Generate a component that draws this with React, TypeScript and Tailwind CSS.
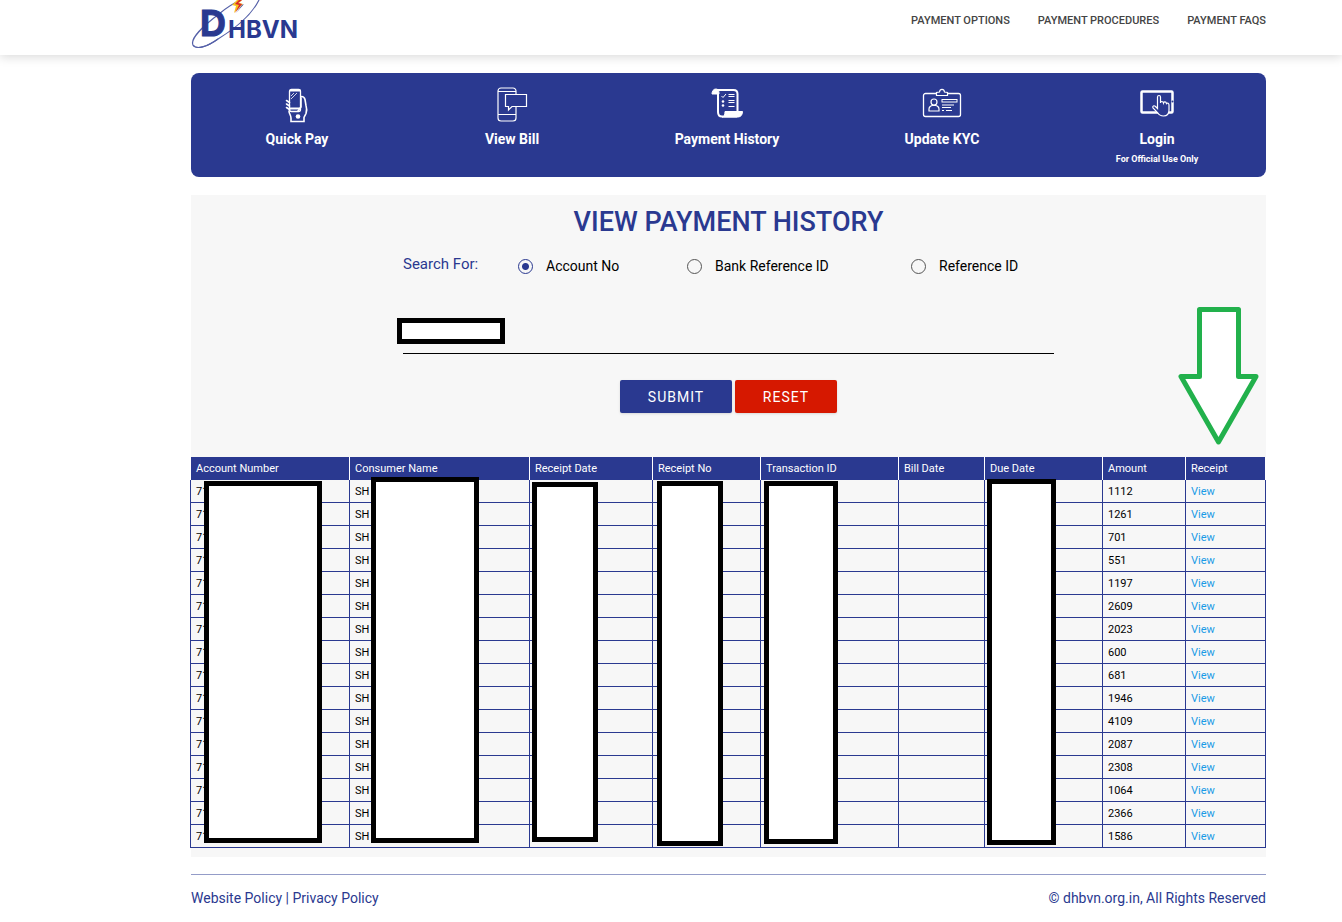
import type { ReactNode } from "react";

const navLinks = ["PAYMENT OPTIONS", "PAYMENT PROCEDURES", "PAYMENT FAQS"];

const columns = [
	{ label: "Account Number", width: "w-[159px]" },
	{ label: "Consumer Name", width: "w-[180px]" },
	{ label: "Receipt Date", width: "w-[123px]" },
	{ label: "Receipt No", width: "w-[108px]" },
	{ label: "Transaction ID", width: "w-[138px]" },
	{ label: "Bill Date", width: "w-[86px]" },
	{ label: "Due Date", width: "w-[118px]" },
	{ label: "Amount", width: "w-[83px]" },
	{ label: "Receipt", width: "w-[80px]" },
];

const amounts = [
	1112, 1261, 701, 551, 1197, 2609, 2023, 600, 681, 1946, 4109, 2087, 2308,
	1064, 2366, 1586,
];

// boxes that hide the personal data in the table
const masks = [
	"left-[13px] top-[24px] h-[362px] w-[118px]",
	"left-[180px] top-[20px] h-[366px] w-[108px]",
	"left-[341px] top-[25px] h-[360px] w-[66px]",
	"left-[466px] top-[24px] h-[365px] w-[66px]",
	"left-[573px] top-[24px] h-[363px] w-[74px]",
	"left-[796px] top-[22px] h-[366px] w-[69px]",
];

function Logo() {
	return (
		<svg width="110" height="50" viewBox="0 0 110 50" role="img" aria-label="DHBVN">
			<g fill="none" stroke="#5560a8" strokeWidth="1.2">
				<path d="M50 0C40 4 34 9 28 14 12 26-1 39 2 45c3 5 14 2 25-6" />
				<path d="M2 45c3 5 14 2 25-6C45 28 61 14 68 0" />
			</g>
			<path d="M46 0l-5 5 4 1-2 7 9-9-4-1 3-3z" fill="#f7c21c" />
			<path d="M48 0l-4 4 4 1-4 8 7-9-4-1 4-3z" fill="#d8262c" />
			<path d="M51 5l2-1-8 9z" fill="#2a3990" />
			<g fill="#2a3990" className="font-['Inter',sans-serif]">
				<text x="9" y="36" fontSize="36" fontWeight="700" stroke="#2a3990" strokeWidth="1">
					D
				</text>
				<text x="37" y="38" fontSize="24" fontWeight="700">
					HBVN
				</text>
			</g>
		</svg>
	);
}

function QuickPayIcon() {
	return (
		<svg width="36" height="36" viewBox="-1 -1 36 36" fill="none" stroke="white">
			<rect x="9.5" y="1.5" width="11" height="22" rx="2" strokeWidth="1.3" />
			<path d="M9.500 2.500h11M9.500 20.500h11" strokeWidth="2" />
			<path d="M11 11l6-6M11 8l3-3" strokeWidth=".8" />
			<path
				d="M9.500 14.500L6.500 12.500M9.500 18l-3-2M9.500 21.500l-3-2M9 23c0 3 2 4 2 7v3.500h13v-4l2-4c1-3 1-5 0-8l-1-6c-.500-2-1.500-3-3.500-3M21 10v9l-3 4"
				strokeWidth="1.600"
				strokeLinecap="round"
			/>
			<circle cx="18" cy="28.500" r="2.300" fill="white" stroke="none" />
		</svg>
	);
}

function ViewBillIcon() {
	return (
		<svg width="36" height="36" viewBox="0 0 36 36" fill="none" stroke="white">
			<path d="M22 7V4a3 3 0 0 0-3-3H7a3 3 0 0 0-3 3v27a3 3 0 0 0 3 3h12a3 3 0 0 0 3-3V20" strokeWidth="1.200" />
			<path d="M4 4.500h18M4 27.500h18" strokeWidth="1.200" />
			<path d="M11.500 7.500h21v12H18l-3.500 3.500v-3.500h-3z" strokeWidth="1.200" />
		</svg>
	);
}

function HistoryIcon() {
	return (
		<svg width="36" height="36" viewBox="-1 0 36 36" fill="none" stroke="white">
			<path d="M8 7v18c0 3 1.500 4.500 4 4.500h15" strokeWidth="2" />
			<path d="M27.500 24V7c0-3-1-4-4-4H7" strokeWidth="2" />
			<path d="M2 7c0-3 1.500-5 4-5s3 2 3 5z" fill="white" />
			<path d="M15 24.500h17.500c0 3-1.500 5.500-4.500 5.500H12c2 0 3-2 3-5.500z" fill="white" />
			<path d="M11.500 9l1.500 1.500 3-3.500" strokeWidth="1" />
			<circle cx="13" cy="14.500" r="1.300" fill="white" stroke="none" />
			<circle cx="13" cy="18.500" r="1.300" fill="white" stroke="none" />
			<path d="M18.500 7.500h6M18.500 9.500h6M18.500 13.500h6M18.500 15.500h6M18.500 19.500h6" strokeWidth="1" />
		</svg>
	);
}

function KycIcon() {
	return (
		<svg width="40" height="36" viewBox="0 0 40 36" fill="none" stroke="white">
			<path d="M14 6.500H3.500a2 2 0 0 0-2 2v19a2 2 0 0 0 2 2h33a2 2 0 0 0 2-2v-19a2 2 0 0 0-2-2H26" strokeWidth="1.300" />
			<path d="M14.500 8.500v-3l3-.5c.500-3.500 4.500-3.500 5 0l3 .5v3z" strokeWidth="1.200" />
			<circle cx="12" cy="15" r="3" strokeWidth="1.200" />
			<path d="M7 24v-2c0-2 2-3.500 3.500-3.500h3c1.500 0 3.500 1.500 3.500 3.500v2z" strokeWidth="1.200" />
			<rect x="20" y="12.500" width="15" height="2.500" />
			<path d="M20 18h12M20 20.500h9" strokeWidth="1.200" />
			<path d="M20 23.500h2m2 0h6" strokeWidth="1" />
		</svg>
	);
}

function LoginIcon() {
	return (
		<svg width="36" height="36" viewBox="0 0 36 36" fill="none" stroke="white">
			<rect x="2.500" y="4.500" width="31" height="21" rx="1" strokeWidth="2.500" />
			<circle cx="33.500" cy="14.500" r="1" fill="#2a3990" stroke="none" />
			<path
				d="M18.500 20V10c0-2 3-2 3 0v6c0-2 2.500-2 3 0 .500-1.500 2.500-1.500 3 .5 1-1 2.500 0 2.500 1.500V23c0 4-2 6-5.500 6-3 0-4.500-1-6-3.500L14 21c-1-2 1-3 2.500-1.500l2 2z"
				fill="#2a3990"
				strokeWidth="1.200"
			/>
		</svg>
	);
}

const services: { label: string; note?: string; icon: ReactNode }[] = [
	{ label: "Quick Pay", icon: <QuickPayIcon /> },
	{ label: "View Bill", icon: <ViewBillIcon /> },
	{ label: "Payment History", icon: <HistoryIcon /> },
	{ label: "Update KYC", icon: <KycIcon /> },
	{ label: "Login", note: "For Official Use Only", icon: <LoginIcon /> },
];

function SearchOption({ label, checked }: { label: string; checked?: boolean }) {
	return (
		<label className="flex items-center gap-[13px] text-sm leading-5 text-black">
			<input
				type="radio"
				name="searchFor"
				defaultChecked={checked}
				className="size-[15px] appearance-none rounded-full border border-[#555] checked:border-[#2a3990] checked:bg-[radial-gradient(#2a3990_3px,transparent_4px)]"
			/>
			{label}
		</label>
	);
}

function SearchForm() {
	return (
		<form className="px-[212px] pt-3.5" onSubmit={(e) => e.preventDefault()}>
			<fieldset className="flex items-center">
				<legend className="float-left w-[115px] pb-1 text-[15px] leading-5 text-[#2a3990]">
					Search For:
				</legend>
				<div className="flex flex-wrap">
					<div className="w-[169px]">
						<SearchOption label="Account No" checked />
					</div>
					<div className="w-[224px]">
						<SearchOption label="Bank Reference ID" />
					</div>
					<SearchOption label="Reference ID" />
				</div>
			</fieldset>
			<div className="relative mt-10">
				<input
					type="text"
					aria-label="Account No"
					className="block h-9 w-full border-b border-black bg-transparent outline-none"
				/>
				<span className="absolute -left-1.5 top-0 h-[26px] w-[108px] border-[5px] border-black bg-white" />
			</div>
			<div className="mt-[26px] flex justify-center gap-[3px] text-sm tracking-[1px] text-white">
				<button type="submit" className="h-[33px] w-28 rounded-xs bg-[#2a3990] shadow">
					SUBMIT
				</button>
				<button type="reset" className="h-[33px] w-[102px] rounded-xs bg-[#d61800] shadow">
					RESET
				</button>
			</div>
		</form>
	);
}

function HistoryTable() {
	return (
		<div className="relative mt-11">
			<table className="-ml-px w-[calc(100%+1px)] table-fixed border-collapse text-left text-[11px] leading-4">
				<thead>
					<tr className="h-[22px] bg-[#2a3990] text-white">
						{columns.map((column) => (
							<th
								key={column.label}
								className={`${column.width} border-x border-white px-[5px] pb-0 pt-0.5 font-normal`}
							>
								{column.label}
							</th>
						))}
					</tr>
				</thead>
				<tbody>
					{amounts.map((amount) => (
						<tr key={amount} className="h-[23px] text-black">
							<td className="border border-[#2a3990] px-[5px] pt-0.5">71</td>
							<td className="border border-[#2a3990] px-[5px] pt-0.5">SH</td>
							<td className="border border-[#2a3990]" />
							<td className="border border-[#2a3990]" />
							<td className="border border-[#2a3990]" />
							<td className="border border-[#2a3990]" />
							<td className="border border-[#2a3990]" />
							<td className="border border-[#2a3990] px-[5px] pt-0.5">{amount}</td>
							<td className="border border-[#2a3990] px-[5px] pt-0.5">
								<a href="#" className="text-[#1a9be6]">
									View
								</a>
							</td>
						</tr>
					))}
				</tbody>
			</table>
			{masks.map((mask) => (
				<span key={mask} className={`absolute border-[5px] border-black bg-white ${mask}`} />
			))}
			<svg
				className="absolute -top-[151px] right-[6px]"
				width="82"
				height="140"
				viewBox="0 0 82 140"
				fill="white"
				stroke="#22b14c"
				strokeWidth="5"
				strokeLinejoin="round"
			>
				<path d="M21.500 3.500h39v67h17.500L40.500 136 3 70.500h18.500z" />
			</svg>
		</div>
	);
}

export default function App() {
	return (
		<div className="bg-white font-['Roboto',sans-serif]">
			<header className="flex h-[55px] items-start justify-between pl-[191px] pr-[76px] shadow-[0_2px_10px_rgba(0,0,0,0.15)]">
				<a href="#">
					<Logo />
				</a>
				<nav className="flex gap-7 pt-[13px] text-[11px] font-medium leading-4 text-[#444]">
					{navLinks.map((link) => (
						<a key={link} href="#">
							{link}
						</a>
					))}
				</nav>
			</header>

			<div className="pl-[191px] pr-[76px] pt-[18px]">
				<nav className="grid h-[104px] grid-cols-5 rounded-lg bg-[#2a3990] pt-3.5 text-white">
					{services.map((service) => (
						<a key={service.label} href="#" className="flex flex-col items-center pr-[3px]">
							{service.icon}
							<span className="mt-1.5 text-sm font-bold leading-5">{service.label}</span>
							{service.note && (
								<span className="mt-1 text-[9px] font-bold leading-3">{service.note}</span>
							)}
						</a>
					))}
				</nav>

				<main className="mt-[18px] bg-[#f7f7f7] pb-[9px] pt-[9px]">
					<h1 className="text-center text-[27px] font-medium leading-9 text-[#2a3990]">
						VIEW PAYMENT HISTORY
					</h1>
					<SearchForm />
					<HistoryTable />
				</main>

				<footer className="mt-[17px] flex justify-between border-t border-[#949cc8] pt-[13px] text-sm leading-5 text-[#2a3990]">
					<p>
						<a href="#">Website Policy</a> | <a href="#">Privacy Policy</a>
					</p>
					<p>© dhbvn.org.in, All Rights Reserved</p>
				</footer>
			</div>
		</div>
	);
}
